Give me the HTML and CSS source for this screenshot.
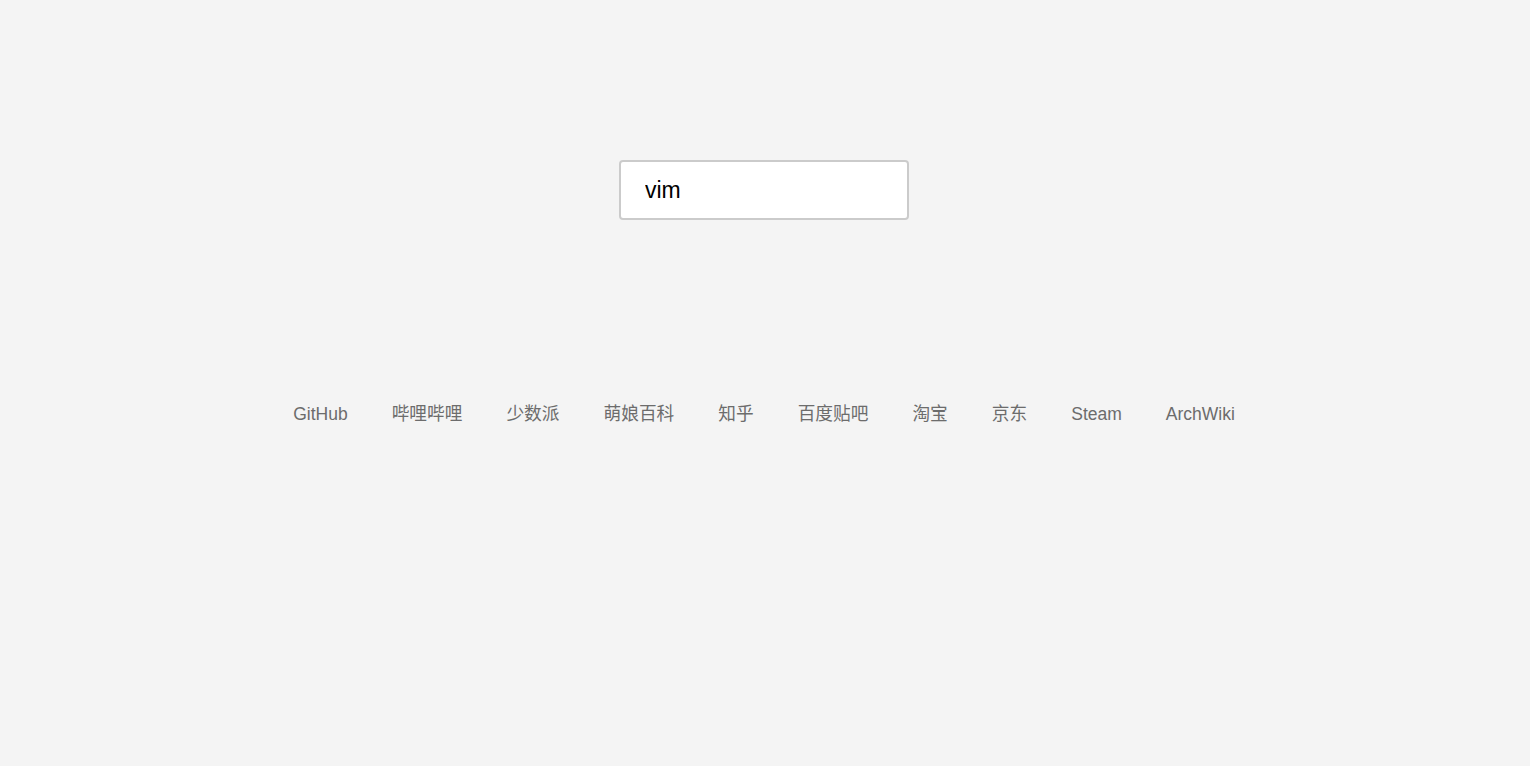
FILE: index.html
```html
<!DOCTYPE html>
<html lang="zh-CN">
<head>
<meta charset="utf-8">
<title>Start</title>
<link rel="stylesheet" href="styles.css">
</head>
<body>
<main class="page">
  <form class="search">
    <input class="search-input" type="text" value="vim">
  </form>
  <nav class="links">
    <a class="link" href="#">GitHub</a>
    <a class="link zh" href="#">哔哩哔哩</a>
    <a class="link zh" href="#">少数派</a>
    <a class="link zh" href="#">萌娘百科</a>
    <a class="link zh" href="#">知乎</a>
    <a class="link zh" href="#">百度贴吧</a>
    <a class="link zh" href="#">淘宝</a>
    <a class="link zh" href="#">京东</a>
    <a class="link" href="#">Steam</a>
    <a class="link" href="#">ArchWiki</a>
  </nav>
</main>
</body>
</html>
```
FILE: styles.css
```css
html, body {
  margin: 0;
  padding: 0;
  height: 100%;
}
body {
  background: #f4f4f4;
  font-family: "Liberation Sans", "Noto Sans CJK SC", sans-serif;
}
.page {
  display: flex;
  flex-direction: column;
  align-items: center;
  padding-top: 160px;
}
.search {
  margin: 0 2px 0 0;
  display: flex;
  justify-content: center;
}
.search-input {
  box-sizing: border-box;
  width: 290px;
  height: 60px;
  margin: 0;
  padding: 0 24px;
  border: 2px solid #cbcbcb;
  border-radius: 4px;
  background: #fff;
  color: #000;
  font-family: "Liberation Sans", sans-serif;
  font-size: 23px;
  outline: none;
}
.links {
  margin-top: 180px;
  margin-right: 2px;
  display: flex;
  justify-content: center;
  align-items: baseline;
  gap: 44px;
}
.link {
  color: #6c6c6c;
  text-decoration: none;
  font-size: 17.5px;
  line-height: 24px;
}
.link.zh {
  font-family: "Noto Sans CJK SC", sans-serif;
  font-size: 17.7px;
}
```
